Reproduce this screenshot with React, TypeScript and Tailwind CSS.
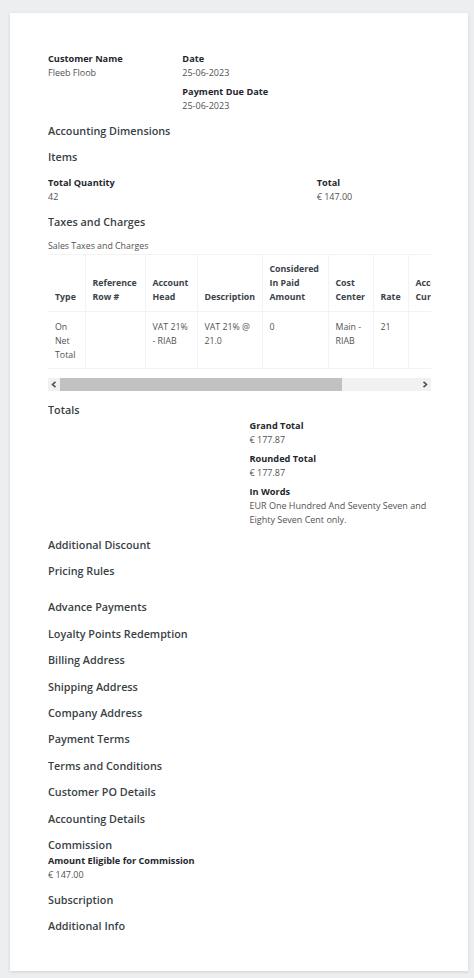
import React from 'react';

type Field = { label: string; value: string };

const lowerSections = [
    'Advance Payments',
    'Loyalty Points Redemption',
    'Billing Address',
    'Shipping Address',
    'Company Address',
    'Payment Terms',
    'Terms and Conditions',
    'Customer PO Details',
    'Accounting Details',
    'Commission',
];

const columns = [
    { title: 'Type', w: 'w-[37px]' },
    { title: 'Reference Row #', w: 'w-[60px]' },
    { title: 'Account Head', w: 'w-[52px]' },
    { title: 'Description', w: 'w-[65px]' },
    { title: 'Considered In Paid Amount', w: 'w-[66px]' },
    { title: 'Cost Center', w: 'w-[45px]' },
    { title: 'Rate', w: 'w-[35px]' },
    { title: 'Account Currency', w: 'w-[70px]' },
];

const row = ['On Net Total', '', 'VAT 21% - RIAB', 'VAT 21% @ 21.0', '0', 'Main - RIAB', '21', ''];

function FieldBlock({ label, value }: Field) {
    return (
        <div className="flex flex-col">
            <span className="text-[9.2px] leading-[14px] font-bold text-[#1f272e]">{label}</span>
            <span className="text-[9px] leading-[14px] text-[#525252]">{value}</span>
        </div>
    );
}

function Heading({ children }: { children: React.ReactNode }) {
    return <h3 className="text-[10.8px] leading-[26.4px] font-semibold text-[#383f46]">{children}</h3>;
}

export default function App() {
    return (
        <div className="min-h-[978px] bg-[#eceef0] pt-[13px] pb-[8px] pl-[10px] pr-[6px]" style={{ fontFamily: '"Open Sans", "Noto Sans", sans-serif' }}>
            <div className="bg-white shadow-[0_1px_3px_rgba(0,0,0,0.12)] pl-[38px] pr-[37px] pt-[39px] pb-[32px]">
                {/* header fields */}
                <div className="grid grid-cols-3 gap-x-5">
                    <FieldBlock label="Customer Name" value="Fleeb Floob" />
                    <div className="flex flex-col gap-[5px]">
                        <FieldBlock label="Date" value="25-06-2023" />
                        <FieldBlock label="Payment Due Date" value="25-06-2023" />
                    </div>
                </div>

                <div className="mt-[5px]">
                    <Heading>Accounting Dimensions</Heading>
                    <Heading>Items</Heading>
                </div>
                <div className="grid grid-cols-3 gap-x-5 mt-[5px]">
                    <FieldBlock label="Total Quantity" value="42" />
                    <div />
                    <FieldBlock label="Total" value="€ 147.00" />
                </div>

                <div className="mt-[5px]">
                    <Heading>Taxes and Charges</Heading>
                </div>
                <div className="text-[8.8px] leading-[14px] text-[#525252] mt-[4px]">Sales Taxes and Charges</div>

                {/* table */}
                <div className="overflow-hidden mt-[1px]">
                    <table className="table-fixed border-collapse text-[8.8px] leading-[14px] w-[430px]">
                        <thead>
                            <tr className="border-t border-[#f2f3f4] h-[57px]">
                                {columns.map(c => (
                                    <th key={c.title} className={`${c.w} align-bottom text-left font-bold text-[#3b4249] px-[7px] pb-[7px] border-r border-[#f2f3f4]`}>
                                        {c.title}
                                    </th>
                                ))}
                            </tr>
                        </thead>
                        <tbody>
                            <tr className="border-t border-b border-[#f2f3f4] h-[57px]">
                                {row.map((v, i) => (
                                    <td key={i} className="align-top px-[7px] pt-[8px] text-[#525252] border-r border-[#f2f3f4]">
                                        {v}
                                    </td>
                                ))}
                            </tr>
                        </tbody>
                    </table>
                </div>

                {/* scrollbar */}
                <div className="mt-[9px] h-[13px] bg-[#f1f1f1] flex items-center">
                    <div className="w-[12px] flex items-center justify-center text-[#505050]">
                        <svg width="6" height="7" viewBox="0 0 6 7"><path d="M4.5 0.8 L1.5 3.5 L4.5 6.2" fill="none" stroke="currentColor" strokeWidth="1.6" /></svg>
                    </div>
                    <div className="h-full flex-1 flex">
                        <div className="h-full w-[282px] bg-[#c1c1c1]" />
                    </div>
                    <div className="w-[12px] flex items-center justify-center text-[#505050]">
                        <svg width="6" height="7" viewBox="0 0 6 7"><path d="M1.5 0.8 L4.5 3.5 L1.5 6.2" fill="none" stroke="currentColor" strokeWidth="1.6" /></svg>
                    </div>
                </div>

                <div className="mt-[6px]">
                    <Heading>Totals</Heading>
                </div>
                <div className="grid grid-cols-2 gap-x-5 -mt-[5px]">
                    <div />
                    <div className="flex flex-col gap-[5px]">
                        <FieldBlock label="Grand Total" value="€ 177.87" />
                        <FieldBlock label="Rounded Total" value="€ 177.87" />
                        <FieldBlock label="In Words" value="EUR One Hundred And Seventy Seven and Eighty Seven Cent only." />
                    </div>
                </div>

                <div className="mt-[5px] flex flex-col">
                    <Heading>Additional Discount</Heading>
                    <Heading>Pricing Rules</Heading>
                </div>
                <div className="mt-[10px] flex flex-col">
                    {lowerSections.map(h => <Heading key={h}>{h}</Heading>)}
                </div>
                <div className="-mt-[5px]">
                    <FieldBlock label="Amount Eligible for Commission" value="€ 147.00" />
                </div>
                <div className="mt-[5px] flex flex-col">
                    <Heading>Subscription</Heading>
                    <Heading>Additional Info</Heading>
                </div>
            </div>
        </div>
    );
}
